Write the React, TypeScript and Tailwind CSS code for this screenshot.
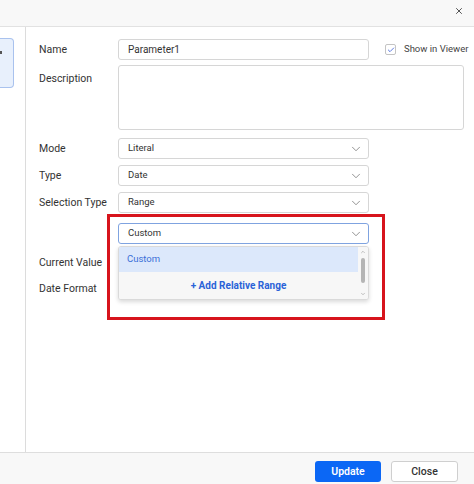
import { Check, ChevronDown, ChevronUp, X } from "lucide-react";

const font = { fontFamily: "Roboto, 'Liberation Sans', sans-serif" };

function SelectBox({ value, focused = false }: { value: string; focused?: boolean }) {
  return (
    <div
      className={`flex h-[21px] w-[251px] items-center justify-between rounded-[3px] border bg-white pl-[9px] pr-[5px] text-[9.5px] text-[#333] ${
        focused ? "border-[#7fa3e0]" : "border-[#d6d6d6]"
      }`}
    >
      <span>{value}</span>
      <ChevronDown className="h-[14px] w-[14px] text-[#666]" strokeWidth={1.2} />
    </div>
  );
}

function Row({ label, top, children }: { label: string; top?: string; children?: React.ReactNode }) {
  return (
    <div className={`flex items-center ${top ?? ""}`}>
      <div className="w-[79px] shrink-0 text-[10.5px] text-[#333]">{label}</div>
      {children}
    </div>
  );
}

export default function App() {
  return (
    <div style={font} className="flex h-[484px] w-[474px] flex-col overflow-hidden bg-white">
      <div className="flex h-[27px] shrink-0 items-center justify-end border-b border-[#e2e2e2] bg-[#f8f8f8] pr-[10px]">
        <X className="mb-[4px] h-[10px] w-[10px] text-[#333]" strokeWidth={2} />
      </div>

      <div className="flex flex-1">
        <div className="w-[26px] shrink-0 border-r border-[#dcdcdc] pt-[11px]">
          <div className="flex h-[50px] w-[14px] items-start rounded-r-[4px] border border-l-0 border-[#a9c2ee] bg-[#e8f0fc] pt-[12px]">
            <div className="h-[3px] w-[2px] bg-[#555]" />
          </div>
        </div>

        <div className="relative flex-1 pl-[13px] pt-[12px]">
          <Row label="Name">
            <div className="flex h-[21px] w-[251px] items-center rounded-[3px] border border-[#d6d6d6] pl-[9px] text-[10px] text-[#333]">
              Parameter1
            </div>
            <div className="ml-[16px] flex items-center gap-[8px]">
              <div className="flex h-[11px] w-[11px] items-center justify-center rounded-[2px] border border-[#c4c4c4] bg-white">
                <Check className="h-[8px] w-[8px] text-[#3b5fd8]" strokeWidth={2.5} />
              </div>
              <span className="text-[9.5px] text-[#444]">Show in Viewer</span>
            </div>
          </Row>

          <div className="mt-[5px] flex items-start">
            <div className="w-[79px] shrink-0 pt-[6px] text-[10.5px] text-[#333]">Description</div>
            <div className="h-[65px] w-[346px] rounded-[3px] border border-[#d6d6d6]" />
          </div>

          <Row label="Mode" top="mt-[8px]">
            <SelectBox value="Literal" />
          </Row>
          <Row label="Type" top="mt-[6px]">
            <SelectBox value="Date" />
          </Row>
          <Row label="Selection Type" top="mt-[6px]">
            <SelectBox value="Range" />
          </Row>
          <Row label="" top="mt-[10px]">
            <SelectBox value="Custom" focused />
          </Row>
          <Row label="Current Value" top="mt-[8px]">
            <div className="h-[21px] w-[251px] rounded-[3px] border border-[#d6d6d6]" />
          </Row>
          <Row label="Date Format" top="mt-[5px]">
            <div className="h-[21px] w-[251px] rounded-[3px] border border-[#d6d6d6]" />
          </Row>

          <div className="absolute left-[92px] top-[219px] flex h-[54px] w-[251px] overflow-hidden rounded-[3px] border border-[#dadada] bg-white shadow-[0_2px_4px_rgba(0,0,0,0.15)]">
            <div className="flex flex-1 flex-col">
              <div className="flex h-[25px] items-center bg-[#dce8fb] pl-[8px] text-[9.5px] text-[#3b6fd8]">
                Custom
              </div>
              <div className="flex flex-1 items-center justify-center bg-[#f7f7f7] text-[10px] font-bold text-[#2a63d8]">
                + Add Relative Range
              </div>
            </div>
            <div className="flex w-[10px] flex-col items-center bg-[#f7f7f7] py-[2px]">
              <ChevronUp className="h-[6px] w-[6px] text-[#888]" strokeWidth={2} />
              <div className="mt-[3px] h-[25px] w-[4px] rounded-full bg-[#b5b5b5]" />
              <div className="flex-1" />
              <ChevronDown className="h-[6px] w-[6px] text-[#888]" strokeWidth={2} />
            </div>
          </div>

          <div className="pointer-events-none absolute left-[81px] top-[187px] h-[106px] w-[278px] border-[3px] border-[#d7141c]" />
        </div>
      </div>

      <div className="flex h-[32px] shrink-0 items-start justify-end gap-[10px] border-t border-[#dedede] bg-[#f8f8f8] pr-[16px] pt-[8px]">
        <button className="h-[21px] w-[66px] rounded-[3px] bg-[#0b67f5] text-[10.5px] font-semibold text-white">
          Update
        </button>
        <button className="h-[21px] w-[67px] rounded-[3px] border border-[#cfcfcf] bg-white text-[10.5px] font-medium text-[#333]">
          Close
        </button>
      </div>
    </div>
  );
}
